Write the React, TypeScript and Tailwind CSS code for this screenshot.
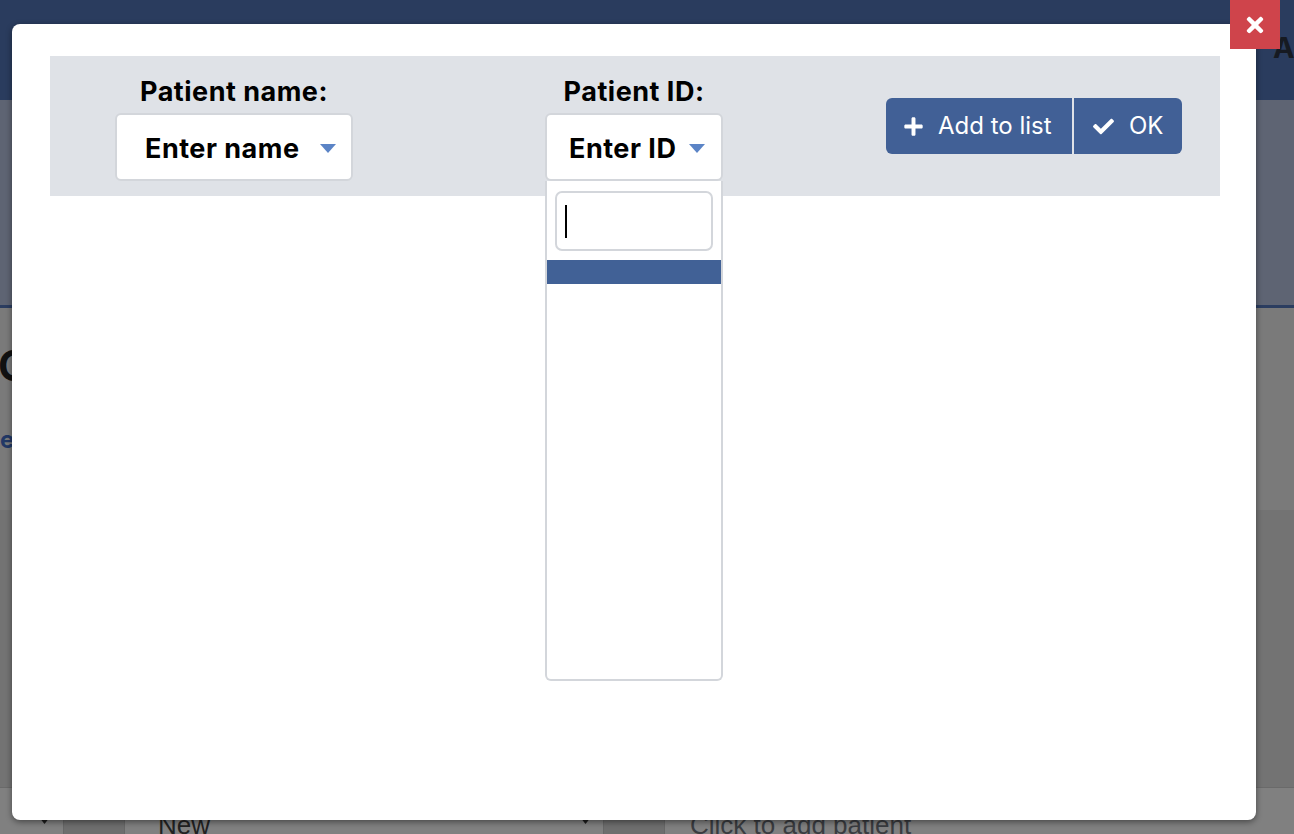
import React from "react";
import { FaPlus, FaCheck, FaTimes } from "react-icons/fa";

function Caret({ className = "" }: { className?: string }) {
  return (
    <svg width="16" height="9" viewBox="0 0 16 9" className={className}>
      <polygon points="0,0 16,0 8,9" fill="#5b84c6" />
    </svg>
  );
}

function DarkCaret() {
  return (
    <svg width="11" height="7" viewBox="0 0 11 7">
      <polygon points="0,0 11,0 5.5,7" fill="#1e1e1e" />
    </svg>
  );
}

export default function App() {
  return (
    <div
      className="relative h-[834px] w-[1294px] overflow-hidden bg-[#7a7a7a] text-black"
      style={{ fontFamily: "Inter, 'Liberation Sans', sans-serif" }}
    >
      {/* dimmed background page */}
      <div className="flex h-[100px] items-start bg-[#2a3c5e] pl-[1273px] pt-[30px]">
        <span className="whitespace-nowrap text-[29px] font-bold leading-[36px] text-[#161a22]">Admin</span>
      </div>
      <div className="h-[205px] bg-[#5e6473]" />
      <div className="h-[3px] bg-[#2b3d60]" />
      <div className="flex h-[202px] flex-col bg-[#7a7a7a] pt-[34px]">
        <div className="-ml-[2px] whitespace-nowrap text-[42px] font-bold leading-[48px] text-[#111]">Orders</div>
        <div className="mt-[35px] whitespace-nowrap text-[24px] font-bold leading-[30px] text-[#223866]">edit</div>
      </div>
      <div className="h-[277px] bg-[#737373]" />
      <div className="flex h-[47px] items-stretch border-t border-[#6a6a6a] bg-[#808080]">
        <div className="flex w-[63px] items-center justify-end pr-[13px] pt-[18px]">
          <DarkCaret />
        </div>
        <div className="w-[62px] border-x border-[#676767] bg-[#6e6e6e]" />
        <div className="flex w-[455px] items-start pl-[33px] pt-[22px]">
          <span className="whitespace-nowrap text-[26px] leading-[30px] text-[#222]" style={{ fontFamily: "'Liberation Sans', sans-serif" }}>New</span>
        </div>
        <div className="flex w-[23px] items-center pt-[18px]">
          <DarkCaret />
        </div>
        <div className="w-[62px] border-x border-[#676767] bg-[#6e6e6e]" />
        <div className="flex items-start pl-[25px] pt-[22px]">
          <span className="whitespace-nowrap text-[26px] leading-[30px] text-[#3a3c40]" style={{ fontFamily: "'Liberation Sans', sans-serif" }}>Click to add patient</span>
        </div>
      </div>

      {/* modal */}
      <div className="absolute left-[12px] top-[24px] h-[796px] w-[1244px] rounded-[8px] bg-white pl-[38px] pr-[36px] pt-[32px] shadow-[0_2px_6px_rgba(0,0,0,0.45)]">
        <div className="flex h-[140px] items-start bg-[#dfe2e7]">
          {/* Patient name */}
          <div className="ml-[65px] mt-[20px] flex w-[238px] flex-col items-center">
            <div className="whitespace-nowrap text-[27px] font-bold leading-[32px] tracking-[0.5px]">Patient name:</div>
            <div className="mt-[5px] flex h-[68px] w-full items-center rounded-[6px] border-2 border-[#d3d6db] bg-white pl-[28px]">
              <span className="mt-[3px] whitespace-nowrap text-[27px] font-bold leading-[32px] tracking-[0.5px]">Enter name</span>
              <Caret className="ml-[20px] mt-[2px]" />
            </div>
          </div>

          {/* Patient ID */}
          <div className="relative ml-[192px] mt-[20px] flex w-[178px] flex-col items-center">
            <div className="whitespace-nowrap text-[27px] font-bold leading-[32px] tracking-[0.5px]">Patient ID:</div>
            <div className="mt-[5px] flex h-[68px] w-full items-center rounded-[6px] border-2 border-[#d3d6db] bg-white pl-[22px]">
              <span className="mt-[3px] whitespace-nowrap text-[27px] font-bold leading-[32px] tracking-[0.5px]">Enter ID</span>
              <Caret className="ml-[13px] mt-[2px]" />
            </div>
            <div className="absolute left-0 top-[105px] flex h-[500px] w-[178px] flex-col rounded-b-[6px] border-2 border-t-0 border-[#d3d6db] bg-white">
              <div className="mx-[8px] mt-[10px] flex h-[60px] items-center rounded-[7px] border-2 border-[#d3d6db] pl-[8px]">
                <div className="h-[33px] w-[2px] bg-black" />
              </div>
              <div className="mt-[9px] h-[24px] bg-[#416196]" />
            </div>
          </div>

          {/* Buttons */}
          <div className="ml-[163px] mt-[42px] flex h-[56px] gap-[2px] text-white">
            <div className="flex w-[186px] items-center rounded-l-[6px] bg-[#416096] pl-[17px]">
              <FaPlus className="h-[21px] w-[21px]" />
              <span className="ml-[14px] whitespace-nowrap text-[24px] leading-[30px]">Add to list</span>
            </div>
            <div className="flex w-[108px] items-center rounded-r-[6px] bg-[#416096] pl-[17px]">
              <FaCheck className="h-[21px] w-[25px]" />
              <span className="ml-[13px] text-[24px] leading-[30px]">OK</span>
            </div>
          </div>
        </div>
      </div>

      {/* close button */}
      <div className="absolute left-[1230px] top-0 flex h-[49px] w-[50px] items-center justify-center bg-[#cf444b] text-white">
        <FaTimes className="h-[24px] w-[20px]" />
      </div>
    </div>
  );
}
